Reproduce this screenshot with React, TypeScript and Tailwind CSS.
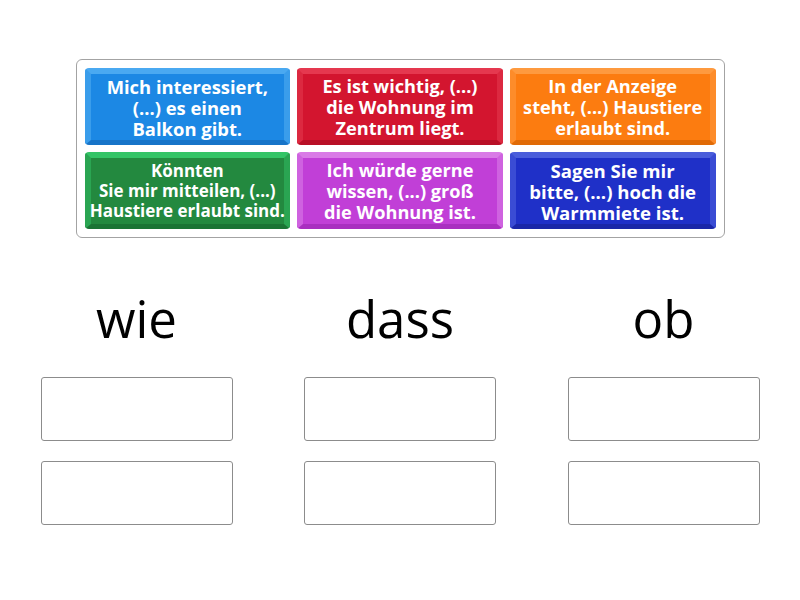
import React from 'react';

// Sentence tiles waiting to be sorted into the groups below
const tiles = [
  {
    lines: ['Mich interessiert,', '(...) es einen', 'Balkon gibt.'],
    text: 'text-[18.4px] leading-[21px]',
    cls: 'bg-[#1c88e4] border-t-[#4aa9f1] border-x-[#3a9deb] border-b-[#1774c8]',
  },
  {
    lines: ['Es ist wichtig, (...)', 'die Wohnung im', 'Zentrum liegt.'],
    text: 'text-[18.2px] leading-[21px]',
    cls: 'bg-[#d3152f] border-t-[#e5384f] border-x-[#dc2940] border-b-[#b80f26]',
  },
  {
    lines: ['In der Anzeige', 'steht, (...) Haustiere', 'erlaubt sind.'],
    text: 'text-[18.2px] leading-[21px]',
    cls: 'bg-[#fc7c10] border-t-[#fe9a3f] border-x-[#fd8c2a] border-b-[#e06a06]',
  },
  {
    lines: ['Könnten', 'Sie mir mitteilen, (...)', 'Haustiere erlaubt sind.'],
    text: 'text-[17px] leading-[20px]',
    cls: 'bg-[#23893f] border-t-[#33c466] border-x-[#2aa552] border-b-[#1a7434]',
  },
  {
    lines: ['Ich würde gerne', 'wissen, (...) groß', 'die Wohnung ist.'],
    text: 'text-[18.2px] leading-[21px]',
    cls: 'bg-[#c13fd7] border-t-[#d97ae6] border-x-[#cf62e0] border-b-[#a92fc0]',
  },
  {
    lines: ['Sagen Sie mir', 'bitte, (...) hoch die', 'Warmmiete ist.'],
    text: 'text-[18.6px] leading-[21px]',
    cls: 'bg-[#1f30c8] border-t-[#4a5ddb] border-x-[#3a4cd4] border-b-[#1a27a8]',
  },
];

const groups = ['wie', 'dass', 'ob'];

function Tile({ lines, text, cls }: { lines: string[]; text: string; cls: string }) {
  return (
    <div
      className={`h-[77px] rounded-[4px] border-solid border-t-[6px] border-x-[6px] border-b-[5px] flex items-center justify-center text-center text-white font-bold ${text} ${cls}`}
    >
      <p className="whitespace-nowrap">
        {lines.map((l, i) => (
          <React.Fragment key={i}>
            {i > 0 && <br />}
            {l}
          </React.Fragment>
        ))}
      </p>
    </div>
  );
}

export default function App() {
  return (
    <div
      className="w-[800px] h-[600px] bg-white overflow-hidden"
      style={{ fontFamily: '"Open Sans", "Noto Sans", sans-serif' }}
    >
      {/* tile tray */}
      <div className="pt-[59px] flex justify-center">
        <div className="w-[649px] border border-[#a3a3a3] rounded-[6px] p-[8px] grid grid-cols-3 gap-[7px]">
          {tiles.map((t, i) => (
            <Tile key={i} {...t} />
          ))}
        </div>
      </div>

      {/* drop groups */}
      <div className="mt-[48px] flex justify-center gap-[71.5px]">
        {groups.map((g) => (
          <div key={g} className="w-[192px] flex flex-col items-center">
            <div className="text-[51px] leading-[65px] text-black">{g}</div>
            <div className="mt-[26px] w-full flex flex-col gap-[20px]">
              <div className="h-[64px] border border-[#8c8c8c] rounded-[3px] bg-white" />
              <div className="h-[64px] border border-[#8c8c8c] rounded-[3px] bg-white" />
            </div>
          </div>
        ))}
      </div>
    </div>
  );
}
